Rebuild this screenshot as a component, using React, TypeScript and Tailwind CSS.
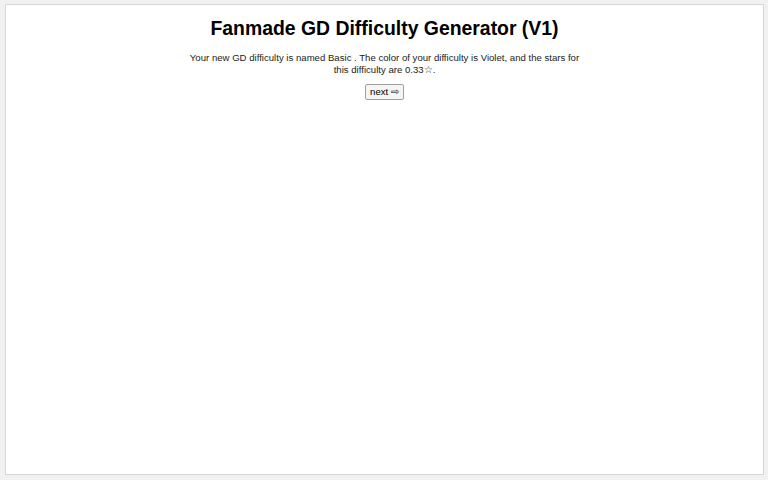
import React, { useState } from 'react';

const names = ['Basic', 'Normal', 'Hyper', 'Mega'];

const App = () => {
  const [idx, setIdx] = useState(0);

  return (
    <div className="w-full h-[480px] bg-[#f1f1f1] pt-[4px] pb-[5px] pl-[5px] pr-[4px] font-['Liberation_Sans',Arial,sans-serif]">
      <div className="w-full h-full bg-white border border-[#d6d6d6] flex flex-col items-center text-black">
        <h1 className="mt-[11px] text-[19.4px] leading-[24px] font-bold">
          Fanmade GD Difficulty Generator (V1)
        </h1>
        <p className="mt-[12px] max-w-[390px] text-center text-[9.6px] leading-[12px] text-[#222]">
          Your new GD difficulty is named {names[idx % names.length]} . The color of your difficulty is Violet, and the stars for this difficulty are 0.33☆.
        </p>
        <button
          className="mt-[8px] h-[16px] px-[4px] text-[9.6px] leading-[14px] bg-[#f5f5f5] border border-[#a0a0a0] rounded-[2px]"
          onClick={() => setIdx(idx)}
        >
          next ⇨
        </button>
      </div>
    </div>
  );
};

export default App;
